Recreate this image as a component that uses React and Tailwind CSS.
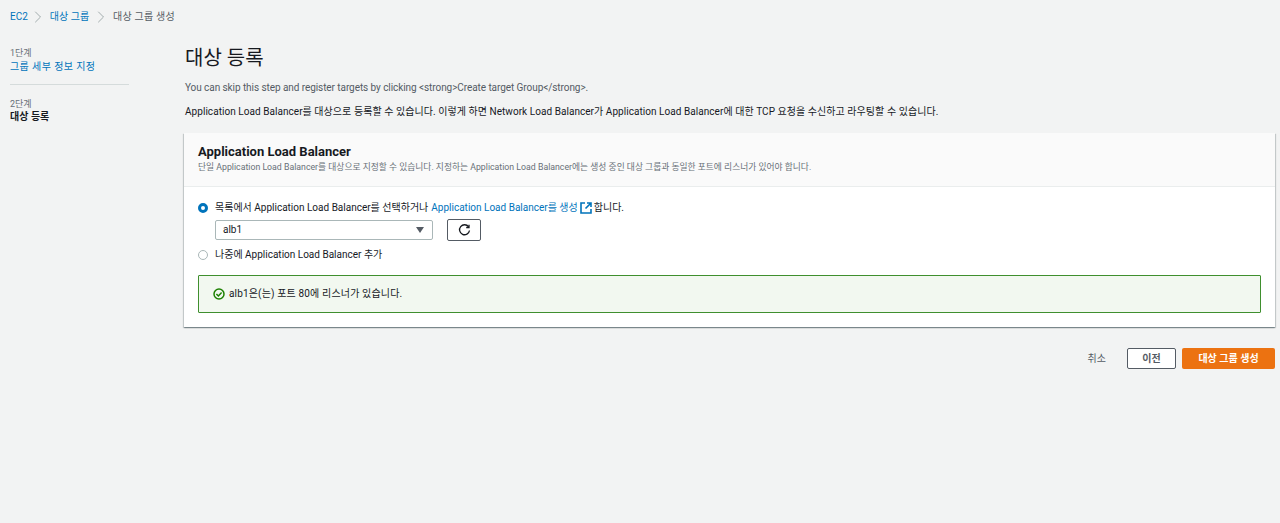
import { ChevronRight } from "lucide-react";

const font = "font-['Roboto','Noto_Sans_CJK_KR',sans-serif]";

const ExternalIcon = () => (
  <svg width="12" height="12" viewBox="0 0 12 12" fill="none" stroke="#0073bb" strokeWidth="1.6" className="mx-[2px]">
    <path d="M5 1H1v10h10V7" />
    <path d="M7 1h4v4M11 1L5.5 6.5" />
  </svg>
);

const RefreshIcon = () => (
  <svg width="13" height="13" viewBox="0 0 13 13" fill="none" stroke="#16191f" strokeWidth="1.3">
    <path d="M10.6 2.8A5 5 0 1 0 11.5 6.5" />
    <path d="M11 .8v2.7H8.2" />
  </svg>
);

const CheckIcon = () => (
  <svg width="12" height="12" viewBox="0 0 12 12" fill="none" stroke="#1d8102" strokeWidth="1.5">
    <circle cx="6" cy="6" r="5" />
    <path d="M3.4 6l2 2 3.2-3.4" />
  </svg>
);

export default function App() {
  return (
    <div className={`${font} min-h-screen bg-[#f2f3f3] text-[#16191f] text-[10px] leading-[14px]`}>
      {/* Breadcrumb */}
      <div className="flex items-center h-[34px] pl-[10px]">
        <span className="text-[#0073bb]">EC2</span>
        <ChevronRight className="w-[20px] h-[20px] text-[#879596]" strokeWidth={0.9} />
        <span className="text-[#0073bb] ml-[2px]">대상 그룹</span>
        <ChevronRight className="w-[20px] h-[20px] ml-[2px] text-[#879596]" strokeWidth={0.9} />
        <span className="text-[#545b64] ml-[2px] tracking-[0.2px]">대상 그룹 생성</span>
      </div>

      <div className="flex">
        {/* Steps */}
        <div className="w-[184px] shrink-0 pl-[10px] pt-[13px]">
          <div className="w-[119px] border-b border-[#d5dbdb] h-[38px]">
            <div className="text-[#687078] text-[9px] leading-[12px]">1단계</div>
            <div className="text-[#0073bb] mt-[1px] tracking-[0.4px]">그룹 세부 정보 지정</div>
          </div>
          <div className="text-[#687078] text-[9px] leading-[12px] mt-[13px]">2단계</div>
          <div className="font-bold">대상 등록</div>
        </div>

        {/* Main */}
        <div className="flex-1 pr-[5px]">
          <h1 className="text-[20px] leading-[26px] font-normal mt-[11px] ml-[1px]">대상 등록</h1>
          <p className="mt-[10px] ml-[1px] text-[#545b64] tracking-[-0.07px]">You can skip this step and register targets by clicking &lt;strong&gt;Create target Group&lt;/strong&gt;.</p>
          <p className="mt-[10px] ml-[1px] tracking-[0.05px]">Application Load Balancer를 대상으로 등록할 수 있습니다. 이렇게 하면 Network Load Balancer가 Application Load Balancer에 대한 TCP 요청을 수신하고 라우팅할 수 있습니다.</p>

          <div className="mt-[14px] bg-white shadow-[0_1px_1px_0_rgba(0,28,36,0.3),1px_1px_1px_0_rgba(0,28,36,0.15),-1px_1px_1px_0_rgba(0,28,36,0.15)]">
            <div className="bg-[#fafafa] border-b border-[#eaeded] h-[54px] px-[14px] pt-[11px]">
              <h2 className="text-[13px] leading-[16px] font-bold">Application Load Balancer</h2>
              <p className="text-[8.75px] leading-[10px] mt-[2px] text-[#687078]">단일 Application Load Balancer를 대상으로 지정할 수 있습니다. 지정하는 Application Load Balancer에는 생성 중인 대상 그룹과 동일한 포트에 리스너가 있어야 합니다.</p>
            </div>
            <div className="px-[14px] pt-[14px] pb-[14px]">
              <div className="flex items-center h-[14px]">
                <span className="w-[10px] h-[10px] rounded-full bg-white border-[3px] border-[#0073bb] mr-[7px]" />
                <span>목록에서 Application Load Balancer를 선택하거나</span>
                <span className="text-[#0073bb] ml-[3px]">Application Load Balancer를 생성</span>
                <ExternalIcon />
                <span>합니다.</span>
              </div>
              <div className="flex items-center mt-[4px] ml-[17px]">
                <div className="w-[218px] h-[20px] bg-white border border-[#aab7b8] rounded-[2px] flex items-center justify-between pl-[7px] pr-[8px]">
                  <span>alb1</span>
                  <span className="w-0 h-0 border-l-[4px] border-r-[4px] border-t-[6px] border-l-transparent border-r-transparent border-t-[#545b64]" />
                </div>
                <div className="ml-[14px] w-[34px] h-[22px] bg-white border border-[#545b64] rounded-[2px] flex items-center justify-center">
                  <RefreshIcon />
                </div>
              </div>
              <div className="flex items-center h-[14px] mt-[7px]">
                <span className="w-[10px] h-[10px] rounded-full bg-white border border-[#aab7b8] mr-[7px]" />
                <span>나중에 Application Load Balancer 추가</span>
              </div>
              <div className="mt-[13px] h-[38px] bg-[#f2f8f0] border border-[#3f8f2e] rounded-[1px] flex items-center pl-[14px] gap-[4px]">
                <CheckIcon />
                <span className="tracking-[0.15px]">alb1은(는) 포트 80에 리스너가 있습니다.</span>
              </div>
            </div>
          </div>

          {/* Footer buttons */}
          <div className="flex items-center justify-end mt-[21px]">
            <span className="text-[#545b64] mr-[21px]">취소</span>
            <div className="w-[49px] h-[21px] bg-white border border-[#545b64] rounded-[2px] flex items-center justify-center font-bold text-[#545b64]">이전</div>
            <div className="ml-[6px] w-[93px] h-[21px] bg-[#ec7211] rounded-[2px] flex items-center justify-center font-bold text-white">대상 그룹 생성</div>
          </div>
        </div>
      </div>
    </div>
  );
}
